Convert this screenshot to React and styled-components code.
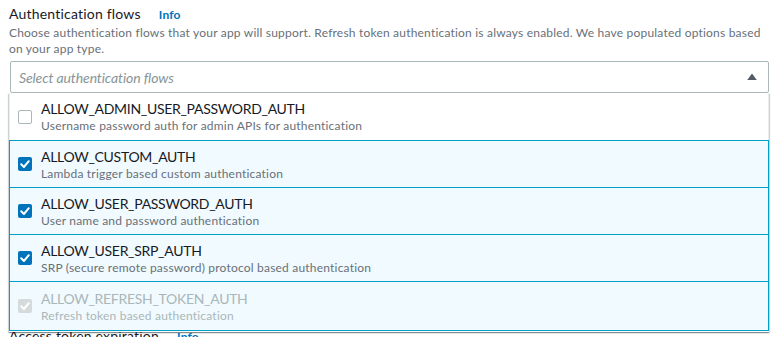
import React from "react";
import styled, { createGlobalStyle } from "styled-components";

const Global = createGlobalStyle`
  html, body { margin: 0; padding: 0; background: #ffffff; }
  body { font-family: Lato, "Liberation Sans", sans-serif; color: #16191f; overflow: hidden; }
  * { box-sizing: border-box; }
`;

const Page = styled.div`
  width: 781px;
  height: 337px;
  padding: 4px 12px 0 9px;
  overflow: hidden;
`;

const Field = styled.div`
  display: flex;
  flex-direction: column;
  margin-top: ${(p) => p.$gap || 0}px;
`;

const LabelRow = styled.div`
  display: flex;
  align-items: baseline;
  gap: 18px;
  height: 20px;
  line-height: 20px;
`;

const Label = styled.span`
  font-size: 14px;
  letter-spacing: 0.2px;
  color: #16191f;
`;

const InfoLink = styled.span`
  font-size: 12px;
  font-weight: 700;
  letter-spacing: 0.2px;
  color: #0073bb;
`;

const Description = styled.div`
  margin-top: 1px;
  font-size: 12px;
  line-height: 16px;
  letter-spacing: 0.2px;
  color: #687078;
`;

const SelectWrap = styled.div`
  position: relative;
  margin-top: 4px;
`;

const Trigger = styled.div`
  height: 32px;
  margin-left: 1px;
  border: 1px solid #aab7b8;
  border-radius: 2px;
  display: flex;
  align-items: center;
  justify-content: space-between;
  padding: 0 11px 0 8px;
`;

const Placeholder = styled.span`
  font-size: 14px;
  font-style: italic;
  letter-spacing: -0.1px;
  color: #879596;
`;

const Dropdown = styled.div`
  position: absolute;
  top: 100%;
  left: 0;
  right: 0;
  z-index: 5;
  background: #ffffff;
  box-shadow: 0 1px 1px 0 rgba(0, 28, 36, 0.3), 1px 1px 1px 0 rgba(0, 28, 36, 0.15),
    -1px 1px 1px 0 rgba(0, 28, 36, 0.15);
  padding-bottom: 1px;
`;

const Option = styled.div`
  display: flex;
  align-items: center;
  gap: 9px;
  height: ${(p) => (p.$last ? 50 : 47)}px;
  padding-left: 8px;
  background: ${(p) => (p.$active ? "#f1faff" : "#ffffff")};
  border-left: 1px solid ${(p) => (p.$active ? "#00a1c9" : "#eaeded")};
  border-right: 1px solid ${(p) => (p.$active ? "#00a1c9" : "#eaeded")};
  border-top: 1px solid ${(p) => (p.$active ? "#00a1c9" : "transparent")};
  border-bottom: ${(p) => (p.$last ? "1px solid #00a1c9" : "none")};
  ${(p) => (p.$first ? "border-top: none;" : "")}
`;

const Box = styled.span`
  flex: none;
  width: 14px;
  height: 14px;
  border-radius: 2px;
  display: flex;
  align-items: center;
  justify-content: center;
  background: ${(p) => (p.$disabled ? "#d5dbdb" : p.$checked ? "#0073bb" : "#ffffff")};
  border: ${(p) => (p.$checked || p.$disabled ? "none" : "1px solid #aab7b8")};
`;

const OptText = styled.div`
  display: flex;
  flex-direction: column;
`;

const OptTitle = styled.span`
  font-size: 14px;
  line-height: 19px;
  letter-spacing: -0.3px;
  color: ${(p) => (p.$disabled ? "#aab7b8" : "#16191f")};
`;

const OptDesc = styled.span`
  font-size: 12px;
  line-height: 16px;
  letter-spacing: 0.2px;
  color: ${(p) => (p.$disabled ? "#aab7b8" : "#687078")};
`;

const Check = () => (
  <svg width="14" height="14" viewBox="0 0 14 14">
    <polyline points="3.2,7.3 5.9,10 10.8,4.2" fill="none" stroke="#ffffff" strokeWidth="2" strokeLinecap="round" strokeLinejoin="round" />
  </svg>
);

const Caret = () => (
  <svg width="10" height="8" viewBox="0 0 10 8">
    <polygon points="5,0.5 9.8,7 0.2,7" fill="#545b64" />
  </svg>
);

const options = [
  { t: "ALLOW_ADMIN_USER_PASSWORD_AUTH", d: "Username password auth for admin APIs for authentication", c: false },
  { t: "ALLOW_CUSTOM_AUTH", d: "Lambda trigger based custom authentication", c: true },
  { t: "ALLOW_USER_PASSWORD_AUTH", d: "User name and password authentication", c: true },
  { t: "ALLOW_USER_SRP_AUTH", d: "SRP (secure remote password) protocol based authentication", c: true },
  { t: "ALLOW_REFRESH_TOKEN_AUTH", d: "Refresh token based authentication", c: true, dis: true },
];

export default function App() {
  return (
    <Page>
      <Global />
      <Field>
        <LabelRow>
          <Label>Authentication flows</Label>
          <InfoLink>Info</InfoLink>
        </LabelRow>
        <Description>
          Choose authentication flows that your app will support. Refresh token authentication is always enabled. We have populated options based on your app type.
        </Description>
        <SelectWrap>
          <Trigger>
            <Placeholder>Select authentication flows</Placeholder>
            <Caret />
          </Trigger>
          <Dropdown>
            {options.map((o, i) => (
              <Option key={o.t} $active={o.c} $first={i === 0} $last={i === options.length - 1}>
                <Box $checked={o.c} $disabled={o.dis}>{o.c && <Check />}</Box>
                <OptText>
                  <OptTitle $disabled={o.dis}>{o.t}</OptTitle>
                  <OptDesc $disabled={o.dis}>{o.d}</OptDesc>
                </OptText>
              </Option>
            ))}
          </Dropdown>
        </SelectWrap>
      </Field>
      <Field $gap={233}>
        <LabelRow>
          <Label>Access token expiration</Label>
          <InfoLink>Info</InfoLink>
        </LabelRow>
      </Field>
    </Page>
  );
}
